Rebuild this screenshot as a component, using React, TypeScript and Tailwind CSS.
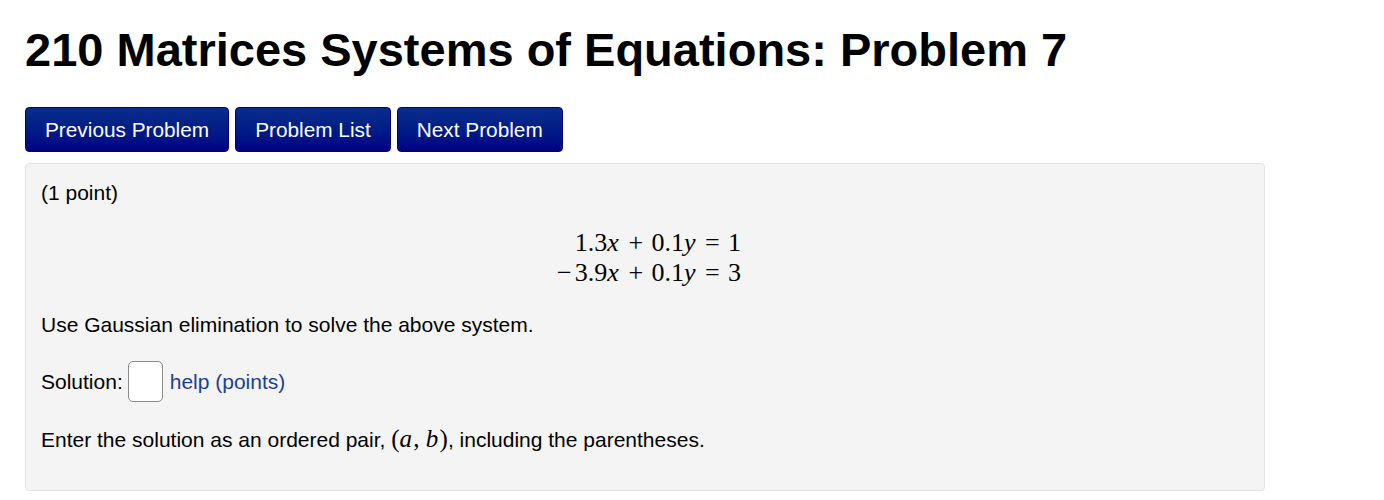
import React from 'react';

const mathFont = { fontFamily: '"Liberation Serif", "DejaVu Serif", serif' };

const NavButton: React.FC<{ label: string }> = ({ label }) => (
  <button
    type="button"
    className="h-[45px] rounded-[4px] border border-[#00006e] bg-gradient-to-b from-[#0b2d8c] to-[#000082] px-[19px] text-[20.8px] text-white"
  >
    {label}
  </button>
);

const V: React.FC<{ children: React.ReactNode }> = ({ children }) => (
  <i className="mr-[0.05em] font-normal">{children}</i>
);

// binary operator / relation with TeX-like spacing
const Op: React.FC<{ children: React.ReactNode; rel?: boolean }> = ({ children, rel }) => (
  <span className={rel ? 'mx-[0.32em]' : 'mx-[0.32em]'}>{children}</span>
);

const App: React.FC = () => {
  return (
    <div className="min-h-[500px] bg-white px-[25px] pt-[22px] font-['Liberation_Sans',Arial,sans-serif] text-black">
      <h1 className="text-[47px] font-bold leading-[56px]">210 Matrices Systems of Equations: Problem 7</h1>

      {/* Navigation */}
      <div className="mt-[29px] flex gap-[6px]">
        <NavButton label="Previous Problem" />
        <NavButton label="Problem List" />
        <NavButton label="Next Problem" />
      </div>

      {/* Problem body */}
      <div className="mt-[11px] w-[1240px] rounded-[4px] border border-[#e3e3e3] bg-[#f4f4f4] px-[15px] pb-[35px] pt-[14px] text-[21px] leading-[30px]">
        <p>(1 point)</p>

        <div className="mt-[20px] flex justify-center text-[26px] leading-[30px]" style={mathFont}>
          <div className="ml-[8px] grid grid-cols-[auto_auto] items-baseline">
            <span className="text-right">
              1.3<V>x</V>
              <Op>+</Op>0.1<V>y</V>
            </span>
            <span>
              <Op rel>=</Op>1
            </span>
            <span className="text-right">
              <span className="mr-[0.12em]">−</span>3.9<V>x</V>
              <Op>+</Op>0.1<V>y</V>
            </span>
            <span>
              <Op rel>=</Op>3
            </span>
          </div>
        </div>

        <p className="mt-[22px]">Use Gaussian elimination to solve the above system.</p>

        <div className="mt-[21px] flex items-center">
          <span>Solution:</span>
          <span className="ml-[5px] h-[41px] w-[35px] rounded-[5px] border border-[#8a8a8a] bg-white" />
          <a href="#" className="ml-[7px] text-[#1c3f94]">
            help (points)
          </a>
        </div>

        <p className="mt-[22px]">
          Enter the solution as an ordered pair,{' '}
          <span className="text-[25px]" style={mathFont}>
            (<V>a</V>, <V>b</V>)
          </span>
          , including the parentheses.
        </p>
      </div>
    </div>
  );
};

export default App;
